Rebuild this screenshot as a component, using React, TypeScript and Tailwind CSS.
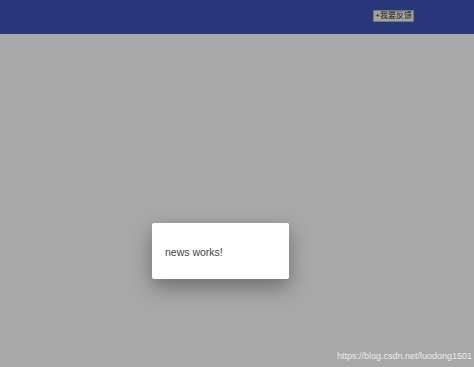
export default function App() {
  return (
    <div className="relative flex h-[367px] w-[474px] flex-col overflow-hidden bg-[#a8a8a8] font-['Liberation_Sans','Noto_Sans_CJK_SC',sans-serif]">
      <header className="flex h-[34px] items-start justify-end bg-[#283779] pr-[60px] pt-[10px]">
        <button className="h-[12px] border border-[#777] bg-[#a3a3a3] px-[1px] text-[8px] leading-[10px] text-[#222]">
          +我要反馈
        </button>
      </header>
      <main className="flex flex-1 items-start pl-[152px] pt-[189px]">
        <div className="flex h-[56px] w-[137px] items-center rounded-[2px] bg-white pl-[13px] pt-[3px] shadow-[0_8px_20px_rgba(0,0,0,0.35)]">
          <span className="text-[10.5px] text-[#444]">news works!</span>
        </div>
      </main>
      <span className="absolute bottom-[4px] right-[2px] text-[9px] text-[#ececec]">
        https://blog.csdn.net/luodong1501
      </span>
    </div>
  );
}
